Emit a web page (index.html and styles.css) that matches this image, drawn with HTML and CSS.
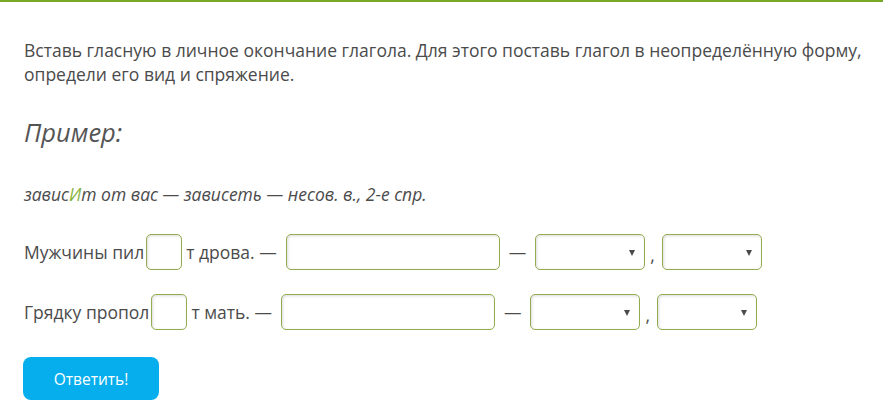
FILE: index.html
```html
<!DOCTYPE html>
<html lang="ru">
<head>
<meta charset="utf-8">
<title>Задание</title>
<link rel="stylesheet" href="styles.css">
</head>
<body>
<div class="topbar"></div>
<main class="content">
  <p class="task">Вставь гласную в личное окончание глагола. Для этого поставь глагол в неопределённую форму, определи его вид и спряжение.</p>
  <h2 class="example-title">Пример:</h2>
  <p class="example">завис<span class="hl">И</span>т от вас — зависеть — несов. в., 2-е спр.</p>
  <div class="row">
    <span>Мужчины пил</span>
    <input class="box small" type="text">
    <span>т дрова. —</span>
    <input class="box big" type="text">
    <span class="dash">—</span>
    <div class="box sel sel1"></div>
    <span class="comma">,</span>
    <div class="box sel sel2"></div>
  </div>
  <div class="row">
    <span>Грядку пропол</span>
    <input class="box small" type="text">
    <span>т мать. —</span>
    <input class="box big" type="text">
    <span class="dash">—</span>
    <div class="box sel sel1"></div>
    <span class="comma">,</span>
    <div class="box sel sel2"></div>
  </div>
  <button class="answer" type="button">Ответить!</button>
</main>
</body>
</html>
```
FILE: styles.css
```css
html, body {
  margin: 0;
  padding: 0;
  background: #fff;
}
body {
  font-family: "Open Sans", "Liberation Sans", sans-serif;
  color: #4b4b4b;
}
.topbar {
  height: 2px;
  background: #7aa829;
}
.content {
  padding: 36px 8px 0 24px;
}
.task {
  margin: 0;
  font-size: 17.5px;
  line-height: 24px;
}
.example-title {
  margin: 30px 0 0 0;
  font-size: 25.5px;
  line-height: 32px;
  font-style: italic;
  font-weight: normal;
  color: #555;
}
.example {
  margin: 34px 0 0 0;
  font-size: 17.5px;
  line-height: 24px;
  font-style: italic;
}
.hl {
  color: #8ab33e;
}
.row {
  display: flex;
  align-items: center;
  margin-top: 24px;
  font-size: 17.5px;
  line-height: 24px;
}
.example + .row {
  margin-top: 28px;
}
.box {
  box-sizing: border-box;
  height: 36px;
  border: 1px solid #93ad4e;
  border-radius: 5px;
  background: #fff;
  box-shadow: inset 1px 1px 3px rgba(0, 0, 0, 0.14);
  font: inherit;
  padding: 0 6px;
  outline: none;
}
.small {
  width: 36px;
  margin: 0 4px 0 2px;
}
.big {
  width: 214px;
  margin: 0 9px 0 9px;
}
.dash {
  margin-right: 9px;
}
.sel {
  position: relative;
}
.sel::after {
  content: "";
  position: absolute;
  right: 9px;
  top: 15px;
  border-left: 3.5px solid transparent;
  border-right: 3.5px solid transparent;
  border-top: 6px solid #4a4a4a;
}
.sel1 {
  width: 110px;
}
.sel2 {
  width: 100px;
}
.comma {
  margin: 0 7px 0 5px;
  position: relative;
  top: 3px;
}
.answer {
  display: block;
  margin-top: 27px;
  margin-left: -1px;
  width: 136px;
  height: 43px;
  border: none;
  border-radius: 8px;
  background: #06aeed;
  color: #fff;
  font-family: "Open Sans", "Liberation Sans", sans-serif;
  font-size: 15.5px;
}
```
